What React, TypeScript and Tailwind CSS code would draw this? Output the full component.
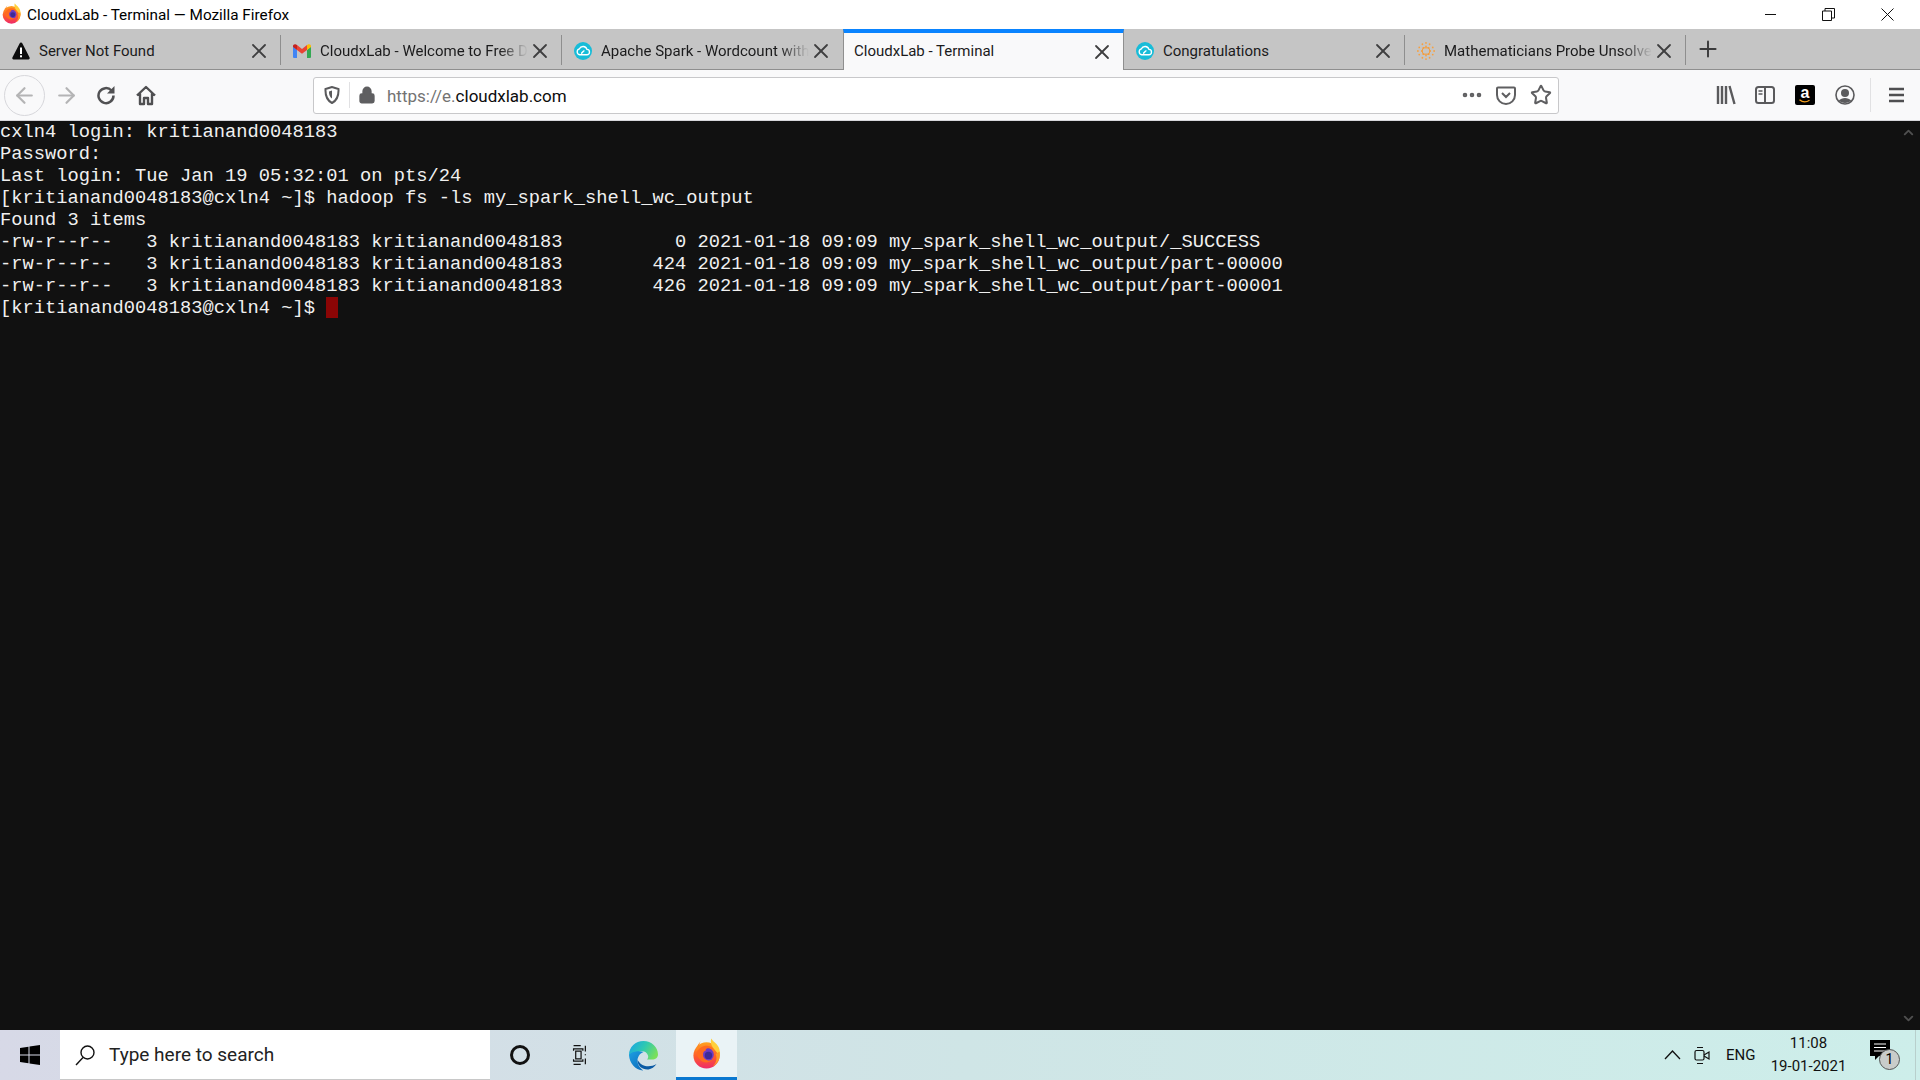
import { ArrowLeft, ArrowRight, ChevronDown, ChevronUp, Ellipsis, Lock, Plus, Star, X } from "lucide-react";

interface tabInfo {
  title: string;
  icon?: "alert" | "gmail" | "cloud" | "quanta";
  active?: boolean;
  fade?: boolean;
}

const tabs: tabInfo[] = [
  { title: "Server Not Found", icon: "alert" },
  { title: "CloudxLab - Welcome to Free D", icon: "gmail", fade: true },
  { title: "Apache Spark - Wordcount with", icon: "cloud", fade: true },
  { title: "CloudxLab - Terminal", active: true },
  { title: "Congratulations", icon: "cloud" },
  { title: "Mathematicians Probe Unsolve", icon: "quanta", fade: true },
];

const terminalLines = [
  "cxln4 login: kritianand0048183",
  "Password:",
  "Last login: Tue Jan 19 05:32:01 on pts/24",
  "[kritianand0048183@cxln4 ~]$ hadoop fs -ls my_spark_shell_wc_output",
  "Found 3 items",
  "-rw-r--r--   3 kritianand0048183 kritianand0048183          0 2021-01-18 09:09 my_spark_shell_wc_output/_SUCCESS",
  "-rw-r--r--   3 kritianand0048183 kritianand0048183        424 2021-01-18 09:09 my_spark_shell_wc_output/part-00000",
  "-rw-r--r--   3 kritianand0048183 kritianand0048183        426 2021-01-18 09:09 my_spark_shell_wc_output/part-00001",
];

function FirefoxLogo({ size, id }: { size: number; id: string }) {
  return (
    <svg width={size} height={size} viewBox="0 0 32 32">
      <defs>
        <linearGradient id={id} x1="0.5" y1="0" x2="0.5" y2="1">
          <stop offset="0" stopColor="#ffa11f" />
          <stop offset="0.55" stopColor="#ff5a2c" />
          <stop offset="1" stopColor="#ee2a6a" />
        </linearGradient>
      </defs>
      <circle cx="16" cy="18" r="13.500" fill={`url(#${id})`} />
      <path d="M21 .5c-1.500 4 .5 7 1 8.500l7.500 9.500c1-6.500-1-9.500-3-12C24.500 4 22 3 21 .5z" fill="#ffcf3a" />
      <path d="M29.500 14c1.200 6-1 12-7 15.500 3-3.500 5-7.500 3-13z" fill="#ff9c24" />
      <path d="M10.500 3C8.500 5 8 8 8.500 10L5 14c.5-4.500 2.500-8.500 5.500-11z" fill="#ff8a1f" />
      <circle cx="16.500" cy="17" r="7" fill="#6b3bc4" />
      <circle cx="18" cy="18" r="3.800" fill="#3f2a96" />
      <path d="M6 15c2-5 7-7.500 11-7 3 .4 5.500 2 6.500 4.500-2.500-2-5.500-2.500-7.500-1.500-1 .5-1 1.500-.5 2-2 .5-3.500 2-3 5 .5 4 5 6 9 5-3 3-9 3-12-.5C7 20 5.500 18 6 15z" fill="#ff6a1f" />
    </svg>
  );
}

function CloudIcon() {
  return (
    <svg width="20" height="20" viewBox="0 0 20 20">
      <circle cx="10" cy="10" r="10" fill="#17bcd8" />
      <path
        d="M6.300 14.200h7.700a3 3 0 0 0 .4-6 4.500 4.500 0 0 0-8.400-.6 3.400 3.400 0 0 0 .3 6.600zM7.800 12.500c1.700 0 2-2.800 3.800-2.800"
        fill="none"
        stroke="#fff"
        strokeWidth="1.500"
      />
    </svg>
  );
}

function TabIcon({ icon }: { icon: tabInfo["icon"] }) {
  if (icon === "alert") {
    return (
      <svg width="18" height="18" viewBox="0 0 18 18">
        <path d="M9 .5c.7 0 1.100.4 1.400 1l7.200 14c.4.900-.1 1.900-1.200 1.900H1.600C.5 17.400 0 16.400.4 15.500l7.200-14c.3-.6.700-1 1.400-1z" fill="#0c0c0d" />
        <rect x="8" y="5.500" width="2" height="6.500" fill="#fff" />
        <rect x="8" y="13.300" width="2" height="2" fill="#fff" />
      </svg>
    );
  }
  if (icon === "gmail") {
    return (
      <svg width="18" height="14" viewBox="0 0 18 14">
        <path d="M0 2.500V13a1 1 0 0 0 1 1h3V6z" fill="#4285f4" />
        <path d="M18 2.500V13a1 1 0 0 1-1 1h-3V6z" fill="#34a853" />
        <path d="M14 1v5l4-3V2c0-1.500-1.700-2.300-3-1.500z" fill="#fbbc04" />
        <path d="M4 6V1l5 4 5-4v5L9 9.800z" fill="#ea4335" />
        <path d="M0 2v1l4 3V1L3 .5C1.700-.3 0 .500 0 2z" fill="#c5221f" />
      </svg>
    );
  }
  if (icon === "cloud") return <CloudIcon />;
  if (icon === "quanta") {
    return (
      <svg width="20" height="20" viewBox="0 0 20 20" fill="#f7a040">
        {[
          [10, 1], [6, 2.500], [14, 2.500], [2.500, 6], [17.500, 6], [1, 10], [19, 10], [2.500, 14], [17.500, 14],
          [6, 17.500], [14, 17.500], [10, 19], [7, 6.500], [13, 6.500], [10, 5], [5.500, 10], [14.500, 10],
          [7, 13.500], [13, 13.500], [10, 15],
        ].map(([cx, cy]) => (
          <circle key={`${cx}-${cy}`} cx={cx} cy={cy} r="1" />
        ))}
        <path d="M7 6.500L13 6.500L14.500 10L13 13.500L7 13.500L5.500 10z" fill="none" stroke="#f59a35" strokeWidth="1.100" />
      </svg>
    );
  }
  return null;
}

function Tab({ tab, noSeparator }: { tab: tabInfo; noSeparator: boolean }) {
  return (
    <div
      className={
        tab.active
          ? "w-[281px] h-[41px] flex items-center bg-[#f9f9fa] border-t-[4px] border-[#0a84ff] border-x border-x-[#8f8f8f] pl-[10px] pr-[9px] -mb-px relative"
          : "w-[281px] h-[40px] flex items-center pt-[4px] pl-[12px] pr-[10px] relative"
      }
    >
      {tab.icon && (
        <div className="w-[18px] h-[20px] flex items-center justify-center mr-[9px] shrink-0">
          <TabIcon icon={tab.icon} />
        </div>
      )}
      <div
        className={
          tab.fade
            ? "flex-1 overflow-hidden whitespace-nowrap text-[15px] text-[#1b1b1c] [mask-image:linear-gradient(to_right,black_86%,transparent_100%)]"
            : "flex-1 overflow-hidden whitespace-nowrap text-[15px] text-[#1b1b1c]"
        }
      >
        {tab.title}
      </div>
      <X size={24} strokeWidth={1.8} className="text-[#3f3f40] shrink-0" />
      {!tab.active && !noSeparator && <div className="absolute right-0 top-[6px] h-[30px] w-px bg-[#8e8e8e]" />}
    </div>
  );
}

function App() {
  return (
    <div className="w-[1920px] h-[1080px] flex flex-col overflow-hidden bg-white font-['Roboto','Liberation_Sans',sans-serif]">
      {/* title bar */}
      <div className="h-[29px] flex items-center bg-white shrink-0">
        <div className="w-[27px] flex pl-[1px] pb-[2px]">
          <FirefoxLogo size={21} id="ffTitle" />
        </div>
        <span className="text-[15.3px] text-black pt-[1px]">CloudxLab - Terminal — Mozilla Firefox</span>
        <div className="ml-auto flex items-center text-black">
          <svg width="13" height="13" viewBox="0 0 13 13" className="mr-[45px]">
            <path d="M1 6.500h11" stroke="#111" strokeWidth="1" />
          </svg>
          <svg width="13" height="13" viewBox="0 0 13 13" className="mr-[46px]">
            <path d="M.5 3h9v9.500h-9zM3 3V.5h9.500V10H9.500" fill="none" stroke="#111" />
          </svg>
          <svg width="13" height="13" viewBox="0 0 13 13" className="mr-[26px]">
            <path d="M.5.500l12 12M12.500.500l-12 12" stroke="#111" />
          </svg>
        </div>
      </div>

      {/* tab strip */}
      <div className="h-[41px] flex bg-[#c5c5c5] border-b border-[#8f8f8f] shrink-0">
        {tabs.map((tab, index) => (
          <Tab key={tab.title} tab={tab} noSeparator={index === 2 || index === 3} />
        ))}
        <div className="w-[44px] flex items-center justify-center">
          <Plus size={26} strokeWidth={1.8} className="text-[#3b3b3c]" />
        </div>
      </div>

      {/* toolbar */}
      <div className="h-[51px] flex items-center bg-[#f9f9fa] border-b border-[#d7d7db] shrink-0">
        <div className="w-[41px] h-[41px] ml-[4px] rounded-full border border-[#d7d7db] flex items-center justify-center">
          <ArrowLeft size={25} strokeWidth={2.1} className="text-[#b4b4b5]" />
        </div>
        <ArrowRight size={25} strokeWidth={2.1} className="text-[#b4b4b5] ml-[9px]" />
        <svg width="20" height="20" viewBox="0 0 20 20" className="ml-[17px]">
          <path d="M15.500 5.500A7.500 7.500 0 1 0 17.500 10.500" fill="none" stroke="#515153" strokeWidth="2.500" />
          <path d="M18.500 1v7.500H11z" fill="#515153" />
        </svg>
        <svg width="20" height="21" viewBox="0 0 20 21" className="ml-[20px]">
          <path d="M1 10.500L10 2l9 8.500M4 8.500V19h4v-6h4v6h4V8.500" fill="none" stroke="#4f4f51" strokeWidth="2.400" strokeLinejoin="round" />
        </svg>

        <div className="w-[1246px] h-[37px] ml-[157px] flex items-center bg-white border border-[#c8c8ca] rounded-[3px]">
          <svg width="16" height="18" viewBox="0 0 16 18" className="ml-[10px]">
            <path d="M8 1L1.500 3c-.3 6 .8 11 6.500 14 5.700-3 6.800-8 6.500-14z" fill="none" stroke="#5a5a5c" strokeWidth="2" />
            <path d="M8 4.500l-3 1c0 3 .6 5.500 3 7z" fill="#5a5a5c" />
          </svg>
          <div className="w-px h-[26px] bg-[#e1e1e3] ml-[9px]" />
          <Lock size={18} strokeWidth={2.4} fill="#5f5f61" className="text-[#5f5f61] ml-[8px]" />
          <span className="ml-[11px] text-[17px] text-[#737373] pt-[3px]">
            https://e.<span className="text-[#0c0c0d]">cloudxlab.com</span>
          </span>
          <Ellipsis size={24} strokeWidth={2.6} className="text-[#5f5f61] ml-auto" />
          <svg width="20" height="19" viewBox="0 0 20 19" className="ml-[12px]">
            <path d="M2 1.500h16a1 1 0 0 1 1 1V9a9 9 0 0 1-18 0V2.500a1 1 0 0 1 1-1z M6 7l4 4 4-4" fill="none" stroke="#5f5f61" strokeWidth="2" />
          </svg>
          <Star size={22} strokeWidth={2.2} className="text-[#5f5f61] ml-[14px] mr-[6px]" />
        </div>

        <svg width="20" height="20" viewBox="0 0 20 20" className="ml-[157px]">
          <path d="M2 1v18M6 1v18M10 1v18M13.500 1l5 18" stroke="#5a5a5c" strokeWidth="2.400" fill="none" />
        </svg>
        <svg width="20" height="20" viewBox="0 0 20 20" className="ml-[19px]">
          <rect x="1" y="2" width="18" height="16" rx="2.500" fill="none" stroke="#5a5a5c" strokeWidth="2" />
          <path d="M10 2v16" stroke="#5a5a5c" strokeWidth="2" />
          <path d="M3.500 6h4M3.500 9h4" stroke="#5a5a5c" strokeWidth="1.500" />
        </svg>
        <div className="w-[20px] h-[20px] ml-[20px] bg-black rounded-[2px] flex items-center justify-center relative">
          <span className="text-white text-[16px] font-bold font-['Liberation_Sans',sans-serif] leading-none -mt-[5px]">a</span>
          <svg width="14" height="5" viewBox="0 0 12 5" className="absolute bottom-[1px] left-[3px]">
            <path d="M.5.800c3 2.500 7 2.500 10 .5" fill="none" stroke="#f7a11e" strokeWidth="1.300" />
          </svg>
        </div>
        <svg width="20" height="20" viewBox="0 0 20 20" className="ml-[20px]">
          <circle cx="10" cy="10" r="9" fill="none" stroke="#5a5a5c" strokeWidth="1.600" />
          <circle cx="10" cy="8" r="4" fill="#5a5a5c" />
          <path d="M3.800 15.500c3-3.500 9.400-3.500 12.400 0-3 3.300-9.400 3.300-12.400 0z" fill="#5a5a5c" />
        </svg>
        <div className="w-px h-[34px] bg-[#e1e1e3] ml-[15px]" />
        <svg width="18" height="16" viewBox="0 0 18 16" className="ml-[17px]">
          <path d="M1 2h15M1 8h15M1 14h15" stroke="#4f4f51" strokeWidth="2.600" />
        </svg>
      </div>

      {/* terminal */}
      <div className="flex-1 flex bg-[#111111] min-h-0">
        <div className="flex-1 font-['Liberation_Mono',monospace] text-[18.75px] leading-[22px] text-[#f0f0f0] whitespace-pre">
          {terminalLines.map((line) => (
            <div key={line} className="h-[22px]">
              {line}
            </div>
          ))}
          <div className="h-[22px] flex">
            <span>{"[kritianand0048183@cxln4 ~]$ "}</span>
            <span className="w-[12px] h-[21px] bg-[#8b0505]" />
          </div>
        </div>
        <div className="w-[22px] pr-[2px] flex flex-col items-center justify-between py-[4px] text-[#4f4f4f]">
          <ChevronUp size={15} strokeWidth={3} />
          <ChevronDown size={15} strokeWidth={3} />
        </div>
      </div>

      {/* windows taskbar */}
      <div className="h-[50px] flex items-center shrink-0 bg-gradient-to-r from-[#d7d9e7] via-[#cfe5e6] to-[#cdeeea]">
        <div className="w-[60px] flex justify-center">
          <svg width="20" height="20" viewBox="0 0 20 20" fill="#000">
            <path d="M0 3l8.500-1.200v7.700H0zM9.500 1.600L20 0v9.500H9.500zM0 10.500h8.500v7.700L0 17zM9.500 10.500H20V20L9.500 18.400z" />
          </svg>
        </div>
        <div className="w-[430px] h-[50px] bg-white border-b-[1px] border-[#c8c8c8] flex items-center">
          <svg width="22" height="22" viewBox="0 0 22 22" className="ml-[14px]">
            <circle cx="13.500" cy="8.500" r="6.500" fill="none" stroke="#111" strokeWidth="1.400" />
            <path d="M9 13.500L2 21" stroke="#111" strokeWidth="1.400" />
          </svg>
          <span className="ml-[13px] text-[19px] text-[#222] pt-[2px]">Type here to search</span>
        </div>
        <div className="w-[60px] flex justify-center">
          <div className="w-[20px] h-[20px] rounded-full border-[3px] border-[#111]" />
        </div>
        <div className="w-[60px] flex justify-center">
          <svg width="20" height="20" viewBox="0 0 20 28">
            <path d="M1 1h10M1 27h10M4 8.500h7.500v11H4zM1 8V5.500h13V8M1 20v2.500h13V20M17.500 1v8M17.500 13v1.500M17.500 19v8" fill="none" stroke="#111" strokeWidth="1.700" />
          </svg>
        </div>
        <div className="w-[66px] flex justify-center">
          <svg width="31" height="31" viewBox="0 0 31 31">
            <defs>
              <linearGradient id="edgeTop" x1="0" y1="0.2" x2="1" y2="0.6">
                <stop offset="0" stopColor="#1aa6e4" />
                <stop offset="0.5" stopColor="#2fc9b0" />
                <stop offset="1" stopColor="#7be05a" />
              </linearGradient>
              <linearGradient id="edgeLeft" x1="0" y1="0" x2="0.6" y2="1">
                <stop offset="0" stopColor="#1c9fe2" />
                <stop offset="1" stopColor="#0f72c0" />
              </linearGradient>
            </defs>
            <path d="M1 15C1 7 7.500 1 15.500 1c8 0 14.500 6 14.500 13.500 0 3-2.500 5-6 5h-5c1-1 1.500-2.500 1-4-1-3.500-4.500-5-8-4-4 1-6.500 3.500-7 5z" fill="url(#edgeTop)" />
            <path d="M1 15c.5 8 6 15 14 15.500 1 0-5-3-5.500-9-.3-4 2-8 6-9.500-7-2-14 1-14.500 3.500z" fill="url(#edgeLeft)" />
            <path d="M9.500 20c0 6 5 10 11 9.500 3-.5 6-2.500 8-5.500-4 2.500-10 3-14 1-3-1.500-4-4-5-5z" fill="#0a5aa4" />
          </svg>
        </div>
        <div className="w-[61px] h-[50px] bg-[#eaf3f6] border-b-[3px] border-[#0b78d0] flex items-center justify-center">
          <FirefoxLogo size={31} id="ffTask" />
        </div>

        <div className="ml-auto flex items-center h-[50px]">
          <svg width="17" height="10" viewBox="0 0 17 10">
            <path d="M1 9l7.500-8L16 9" fill="none" stroke="#111" strokeWidth="1.300" />
          </svg>
          <svg width="16" height="19" viewBox="0 0 16 19" className="ml-[12.500px]">
            <rect x="1" y="4.500" width="9" height="9.500" rx="1.500" fill="none" stroke="#111" strokeWidth="1.200" />
            <path d="M10 9l5-3v7l-5-3M3 1.500h6M3 17.500h6" fill="none" stroke="#111" strokeWidth="1.200" />
          </svg>
          <span className="ml-[16.500px] text-[15px] text-[#111]">ENG</span>
          <div className="ml-[9px] w-[88px] flex flex-col items-center text-[15px] leading-[23px] text-[#111]">
            <span>11:08</span>
            <span>19-01-2021</span>
          </div>
          <div className="ml-[17.500px] mr-[15px] w-[30px] h-[40px] relative">
            <svg width="20" height="21" viewBox="0 0 20 21" className="absolute top-[5px] left-0">
              <path d="M0 0h20v16H9l-4 4v-4H0z" fill="#000" />
              <path d="M4 4h12M4 7.500h12M4 11h12" stroke="#fff" strokeWidth="1" />
            </svg>
            <div className="absolute left-[9px] top-[14px] w-[21px] h-[21px] rounded-full bg-[#c9ccca] border border-[#555] flex items-center justify-center text-[14px] text-black">
              1
            </div>
          </div>
          <div className="w-px h-[50px] bg-[#b8cfcc] mr-[4px]" />
        </div>
      </div>
    </div>
  );
}

export default App;
